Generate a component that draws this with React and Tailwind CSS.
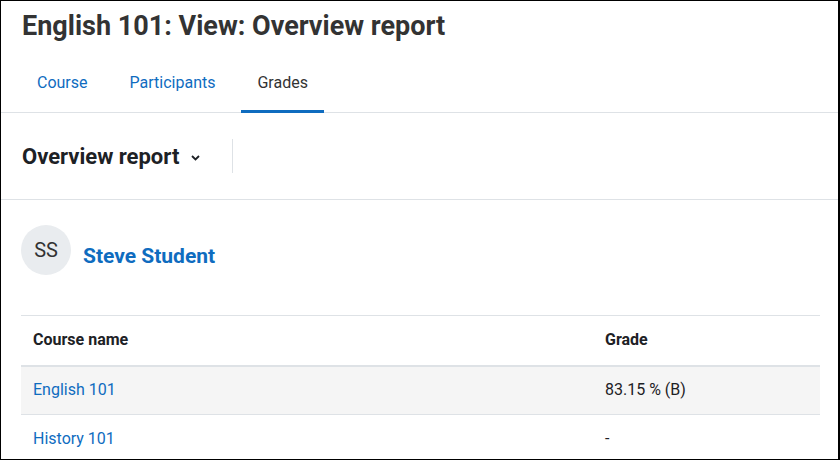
import React from 'react';

const tabs = [
  { label: 'Course', active: false },
  { label: 'Participants', active: false },
  { label: 'Grades', active: true },
];

const rows = [
  { course: 'English 101', grade: '83.15 % (B)' },
  { course: 'History 101', grade: '-' },
];

const App = () => {
  return (
    <div
      className="w-[840px] h-[460px] overflow-hidden bg-white border border-black border-r-2 text-[#1d2125]"
      style={{ fontFamily: 'Roboto, "Liberation Sans", sans-serif' }}
    >
      {/* Page title */}
      <div className="h-[50px] px-[20px] flex items-center">
        <h1 className="text-[27px] font-bold text-[#333333] leading-none pl-px">
          English 101: View: Overview report
        </h1>
      </div>

      {/* Secondary navigation */}
      <nav className="h-[62px] flex items-end gap-[10px] px-[20px] border-b border-[#dee2e6]">
        {tabs.map((tab) => (
          <a
            key={tab.label}
            href="#"
            className={
              tab.active
                ? 'h-full flex items-center px-4 pt-[4px] text-[16px] text-[#333333] border-b-[3px] border-[#0f6cbf] -mb-px'
                : 'h-full flex items-center px-4 pt-[2px] text-[16px] text-[#0f6cbf]'
            }
          >
            {tab.label}
          </a>
        ))}
      </nav>

      {/* Report selector */}
      <div className="h-[87px] flex items-center px-[20px] border-b border-[#dee2e6]">
        <button className="flex items-center text-[22px] font-bold text-[#1d2125] pl-px">
          Overview report
          <svg className="ml-[12px] mt-[3px]" width="9" height="6" viewBox="0 0 9 6" fill="none">
            <path d="M1 1l3.5 3.5L8 1" stroke="#1d2125" strokeWidth="1.8" />
          </svg>
        </button>
        <div className="ml-[32px] h-[34px] border-l border-[#dee2e6]" />
      </div>

      {/* User */}
      <div className="px-[20px] pt-[25px]">
        <div className="flex items-center">
          <div className="w-[50px] h-[50px] rounded-full bg-[#e9ecef] flex items-center justify-center text-[20px] text-[#333333]">
            SS
          </div>
          <a href="#" className="ml-[12px] mt-[14px] text-[21px] font-bold text-[#0f6cbf]">
            Steve Student
          </a>
        </div>

        <table className="mt-[40px] w-[799px] text-[16px] border-collapse">
          <thead>
            <tr className="border-t border-[#dee2e6] border-b-2">
              <th className="w-[572px] h-[50px] px-3 text-left font-bold">Course name</th>
              <th className="h-[50px] px-3 text-left font-bold">Grade</th>
            </tr>
          </thead>
          <tbody>
            {rows.map((row, i) => (
              <tr
                key={row.course}
                className={i % 2 === 0 ? 'bg-[#f5f5f5] border-b border-[#dee2e6]' : 'border-b border-[#dee2e6]'}
              >
                <td className="h-[49px] px-3">
                  <a href="#" className="text-[#0f6cbf]">{row.course}</a>
                </td>
                <td className="h-[49px] px-3">{row.grade}</td>
              </tr>
            ))}
          </tbody>
        </table>
      </div>
    </div>
  );
};

export default App;
